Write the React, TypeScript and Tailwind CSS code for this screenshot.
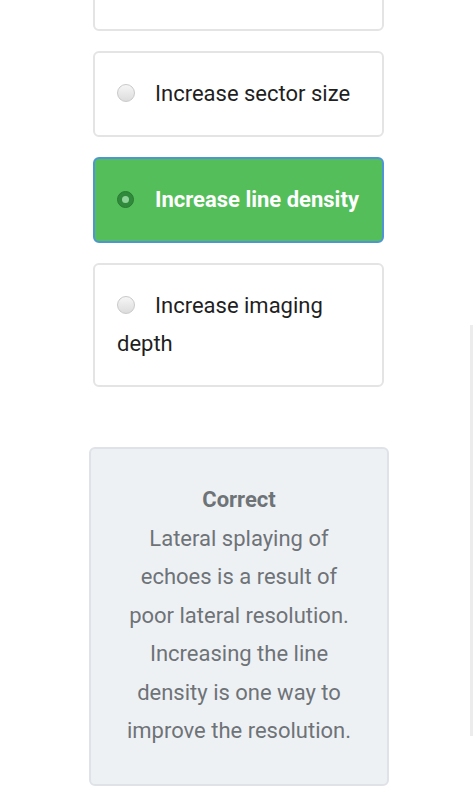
import React from "react";

function Radio({ checked }: { checked?: boolean }) {
  if (checked) {
    return (
      <span className="inline-block align-middle mr-[21px] w-[17px] h-[17px] rounded-full bg-[#2f8a3b] border border-[#2a7a34] relative top-[-2px]">
        <span className="block w-[7px] h-[7px] rounded-full bg-[#8fd39a] mx-auto mt-[4px]" />
      </span>
    );
  }
  return (
    <span className="inline-block align-middle mr-[20px] w-[18px] h-[18px] rounded-full border border-[#c9c9c9] bg-gradient-to-b from-[#f6f6f6] to-[#dcdcdc] relative top-[-2px]" />
  );
}

function Option({ text, selected }: { text?: string; selected?: boolean }) {
  return (
    <div
      className={
        selected
          ? "rounded-[6px] border-2 border-[#4f95d6] bg-[#53be5a] px-[22px] py-[22px] text-white font-bold"
          : "rounded-[6px] border-2 border-[#e4e4e4] bg-white px-[22px] py-[22px] text-[#1f1f1f]"
      }
    >
      <p className="text-[22px] leading-[38px] min-h-[38px]">
        {text !== undefined && <Radio checked={selected} />}
        {text}
      </p>
    </div>
  );
}

export default function App() {
  return (
    <div
      className="relative w-[474px] h-[801px] overflow-hidden bg-white"
      style={{ fontFamily: "Roboto, 'Noto Sans', sans-serif" }}
    >
      <div className="w-[291px] ml-[93px] mt-[-55px] flex flex-col gap-[20px]">
        <Option />
        <Option text="Increase sector size" />
        <Option text="Increase line density" selected />
        <Option text="Increase imaging depth" />
      </div>
      <div className="w-[300px] ml-[89px] mt-[60px] rounded-[6px] border-2 border-[#dfe3e7] bg-[#eef1f4] px-[34px] pt-[32px] pb-[33px] text-center text-[#6e7378] text-[22px] leading-[38.5px]">
        <p className="font-bold">Correct</p>
        <p>
          Lateral splaying of echoes is a result of poor lateral resolution. Increasing the line density is one way to improve the resolution.
        </p>
      </div>
      <div className="absolute left-[470px] top-[325px] w-[3px] h-[411px] bg-[#ececec]" />
    </div>
  );
}
